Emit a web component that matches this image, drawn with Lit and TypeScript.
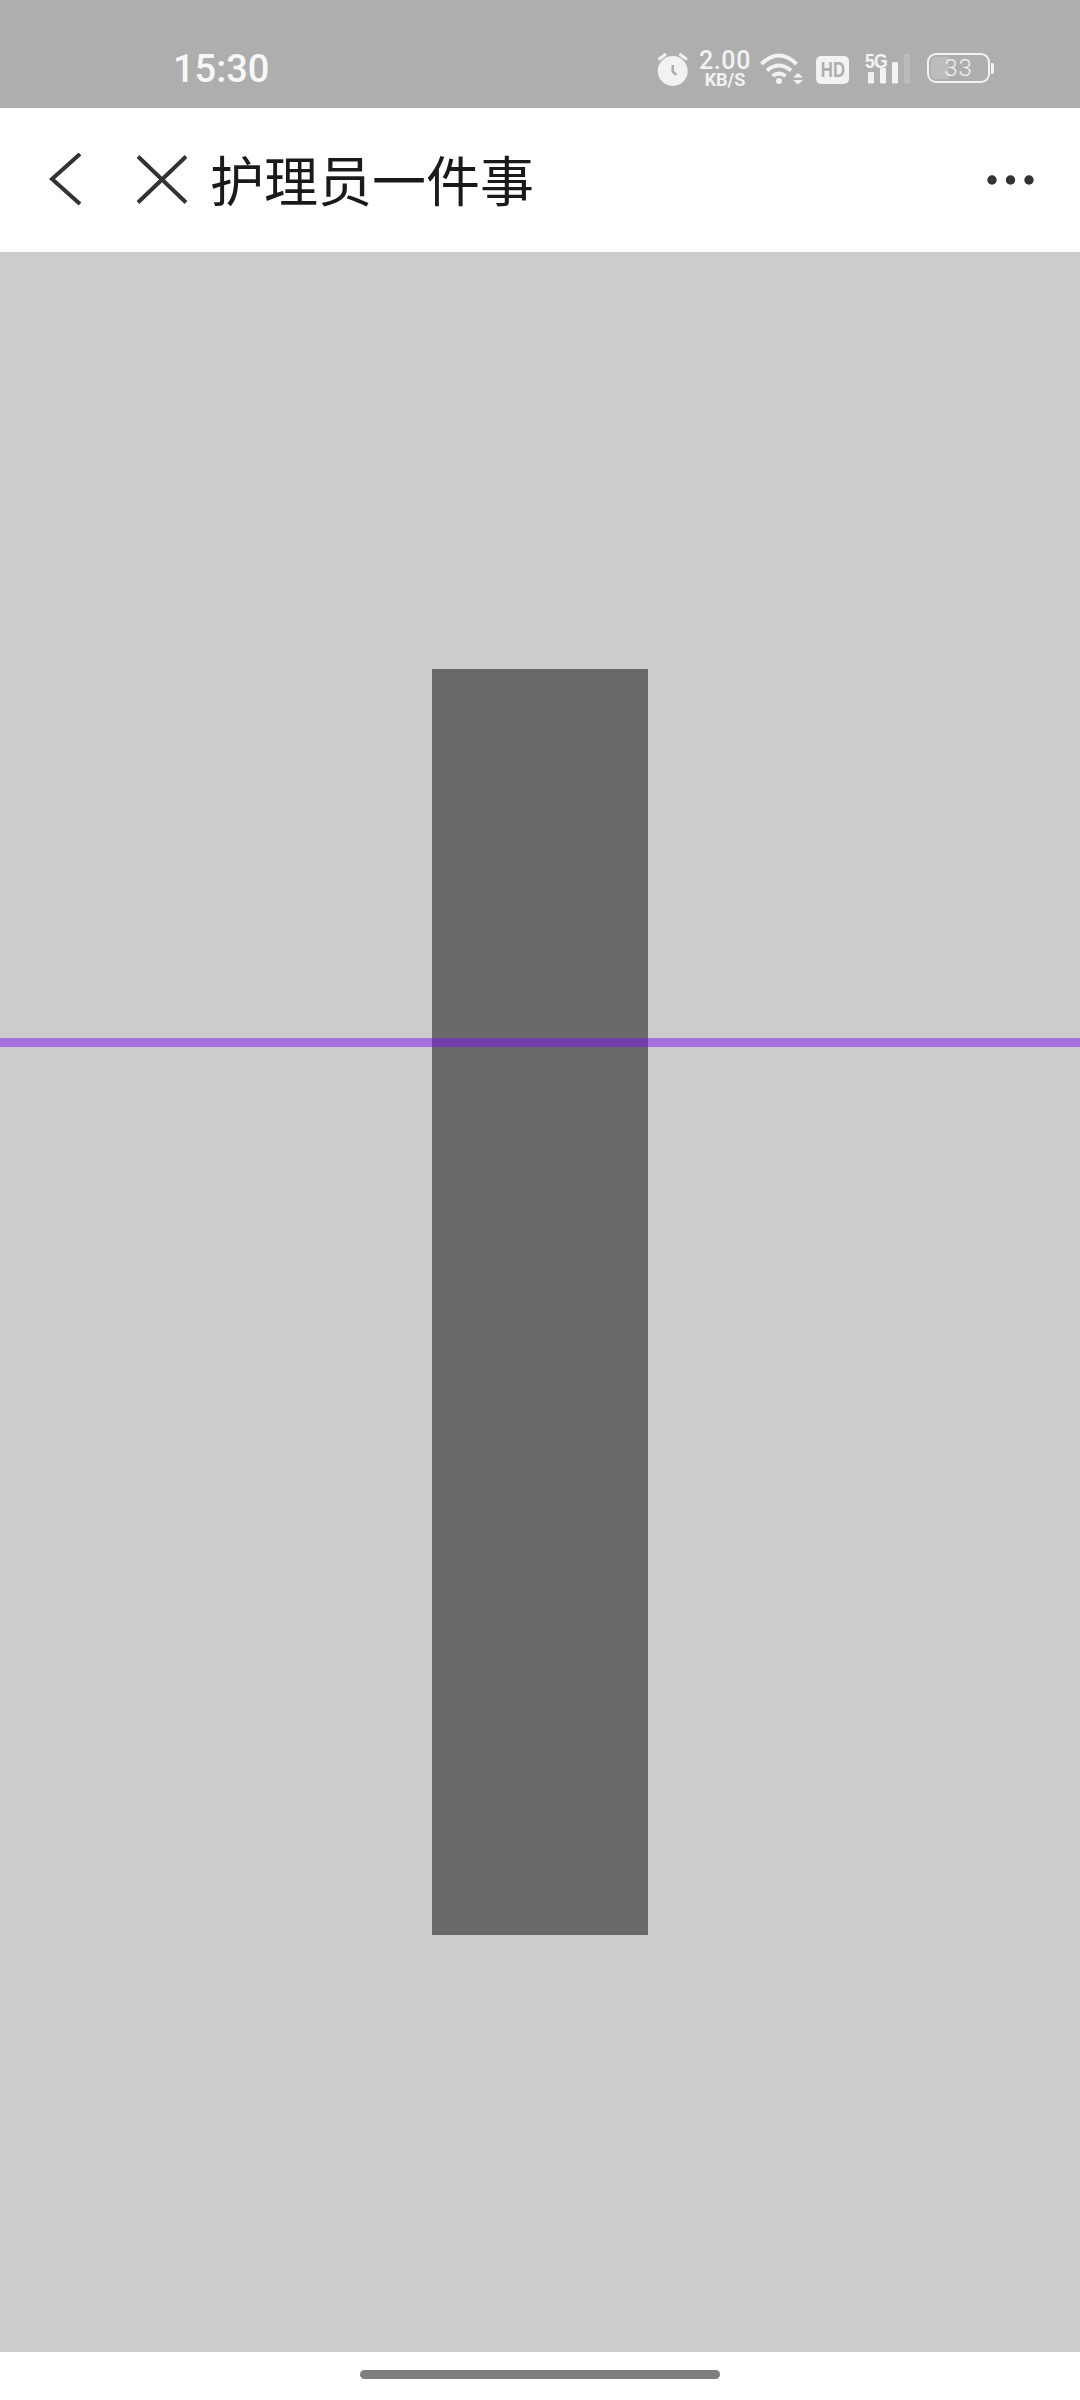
import { LitElement, html, css, svg } from "lit";
import { customElement } from "lit/decorators.js";

@customElement("app-root")
export class AppRoot extends LitElement {
  static styles = css`
    :host { display: block; width: 1080px; height: 2400px; background: #fff; overflow: hidden; }
    .page { display: flex; flex-direction: column; height: 2400px; }
    .status { height: 108px; flex: none; background: #aeaeae; display: flex; align-items: flex-start; color: #f2f2f2; font-family: Roboto, "Liberation Sans", sans-serif; }
    .time { margin: 47px 0 0 173px; font-size: 38px; line-height: 44px; width: 92px; color: #f7f7f7; font-weight: 500; white-space: nowrap; }
    .icons { margin: 50px 0 0 391px; display: flex; align-items: flex-start; }
    .icons svg { display: block; flex: none; }
    .alarm { margin-top: 2px; }
    .speed { width: 58px; margin-left: 6px; display: flex; flex-direction: column; align-items: center; }
    .speed b { font-size: 25px; line-height: 20px; font-weight: 500; letter-spacing: 0.6px; margin-top: 1px; }
    .speed i { font-style: normal; font-size: 18px; line-height: 18px; font-weight: 700; }
    .wifi { margin: 3px 0 0 5px; }
    .hd { margin: 6px 0 0 12px; width: 33px; height: 28px; border-radius: 5px; background: #f2f2f2; color: #aeaeae; font: 700 22px/28px "Liberation Sans", sans-serif; display: flex; justify-content: center; overflow: hidden; }
    .hd span { display: block; transform: scaleX(0.76); }
    .signal { margin: 3px 0 0 16px; position: relative; width: 48px; height: 31px; }
    .five { position: absolute; left: 0; top: -1px; font: 700 20px/18px "Liberation Sans", sans-serif; letter-spacing: -1px; color: #f2f2f2; transform: scaleX(0.88); transform-origin: left top; }
    .battery { margin: 3px 0 0 14px; display: flex; align-items: center; gap: 1px; }
    .shell { width: 63px; height: 30px; box-sizing: border-box; border: 2px solid #f2f2f2; border-radius: 9px; padding: 2px; background: linear-gradient(90deg, #bcbcbc 33%, transparent 33%) content-box; display: flex; align-items: center; justify-content: center; color: #f2f2f2; font: 300 24px/1 Roboto, sans-serif; letter-spacing: 1px; }
    .nub { width: 3px; height: 11px; background: #f2f2f2; border-radius: 0 2px 2px 0; }
    .nav { height: 144px; flex: none; background: #fff; display: flex; align-items: center; }
    .nav svg { display: block; flex: none; }
    .back { margin-left: 49px; }
    .close { margin-left: 53px; }
    .title { margin: -3px 0 0 22px; font: 400 54px/60px "Noto Sans CJK SC", sans-serif; color: #1a1a1a; flex: 1; }
    .more { margin-right: 46px; }
    .stage { position: relative; flex: 1; background: #ccc; display: flex; align-items: center; justify-content: center; }
    .bar { width: 216px; height: 1266px; background: #696969; }
    .line { position: absolute; left: 0; right: 0; top: 786px; height: 9px; background: rgba(126, 20, 244, 0.5); }
    .home { height: 48px; box-sizing: border-box; padding-bottom: 3px; flex: none; background: #fff; display: flex; align-items: center; justify-content: center; }
    .pill { width: 360px; height: 9px; border-radius: 5px; background: #7f7f7f; }
  `;

  private bars() {
    const items = [
      [3, 19, 11.5, "#f2f2f2"],
      [15, 15, 15.5, "#f2f2f2"],
      [27, 9, 21.5, "#f2f2f2"],
      [39, 1, 29.5, "#bcbcbc"],
    ] as const;
    return items.map(([x, y, h, c]) => svg`<rect x=${x} y=${y} width="6" height=${h} fill=${c} rx="1"></rect>`);
  }

  render() {
    return html`
      <div class="page">
        <div class="status">
          <div class="time">15:30</div>
          <div class="icons">
            <svg class="alarm" width="34" height="36" viewBox="0 0 34 36">
              <circle cx="16.7" cy="19" r="15" fill="#f2f2f2"></circle>
              <path d="M16.7 13v6.5l3.6 3.4" fill="none" stroke="#aeaeae" stroke-width="2.6"></path>
              <path d="M2.5 7.5L10 2M31 7.5L23.5 2" fill="none" stroke="#f2f2f2" stroke-width="3"></path>
            </svg>
            <div class="speed"><b>2.00</b><i>KB/S</i></div>
            <svg class="wifi" width="45" height="32" viewBox="0 0 45 32" fill="none" stroke="#f2f2f2" stroke-width="4">
              <path d="M2.5 11Q20 -6 37.5 11"></path>
              <path d="M8 17.5Q20 7.5 32 17.5"></path>
              <path d="M13.5 23Q20 18 26.5 23"></path>
              <circle cx="20" cy="28" r="3" fill="#f2f2f2" stroke="none"></circle>
              <path d="M34 24.5h10l-5-4.5zM34 27h10l-5 4.5z" fill="#f2f2f2" stroke="none"></path>
            </svg>
            <div class="hd"><span>HD</span></div>
            <div class="signal">
              <span class="five">5G</span>
              <svg width="48" height="31" viewBox="0 0 48 31">${this.bars()}</svg>
            </div>
            <div class="battery">
              <div class="shell">33</div>
              <div class="nub"></div>
            </div>
          </div>
        </div>
        <div class="nav">
          <svg class="back" width="34" height="54" viewBox="0 0 34 54" fill="none" stroke="#333" stroke-width="4">
            <path d="M31 1L3 26l28 25"></path>
          </svg>
          <svg class="close" width="52" height="50" viewBox="0 0 52 50" fill="none" stroke="#333" stroke-width="4">
            <path d="M2 1.5l48 46M50 1.5L2 47.5"></path>
          </svg>
          <div class="title">护理员一件事</div>
          <svg class="more" width="47" height="10" viewBox="0 0 47 10" fill="#333">
            <circle cx="5" cy="5" r="4.7"></circle><circle cx="23.5" cy="5" r="4.7"></circle><circle cx="42" cy="5" r="4.7"></circle>
          </svg>
        </div>
        <div class="stage">
          <div class="bar"></div>
          <div class="line"></div>
        </div>
        <div class="home"><div class="pill"></div></div>
      </div>
    `;
  }
}
